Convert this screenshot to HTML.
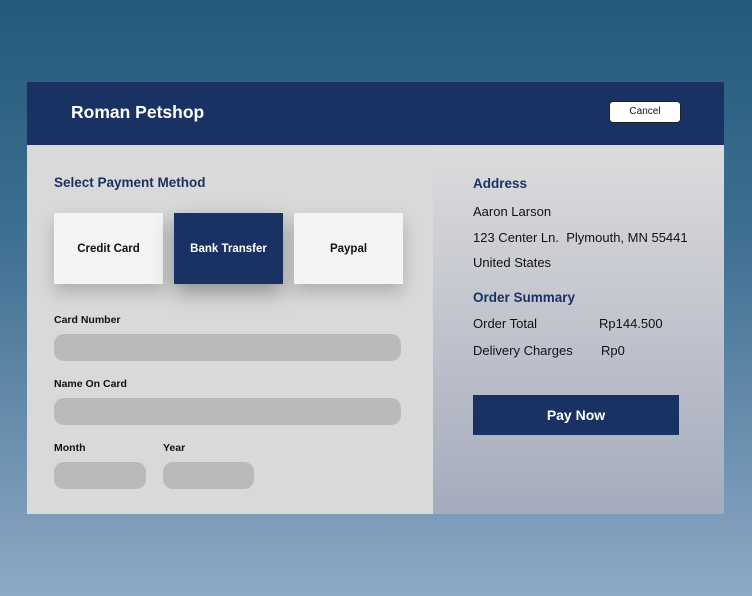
<!DOCTYPE html>
<html><head><style>
*{margin:0;padding:0;box-sizing:border-box}
body{width:752px;height:596px;overflow:hidden;background:linear-gradient(#235a7a 0%,#3f6f92 40%,#8ea9c6 100%);font-family:"Liberation Sans",sans-serif;position:relative}
.card{position:absolute;left:27px;top:82px;width:697px;height:432px;background:#d9d9d9}
.hdr{position:absolute;left:0;top:0;width:697px;height:63px;background:#1a3263}
.title{position:absolute;left:44px;top:20px;color:#fff;font-weight:bold;font-size:17.5px}
.cancel{position:absolute;left:582px;top:19px;width:72px;height:22px;background:#fff;border:1px solid #222;border-radius:4px;font-size:10px;text-align:center;line-height:20px;color:#111}
.right{position:absolute;left:406px;top:63px;width:291px;height:369px;background:linear-gradient(#dcdcdd,#a5abbd)}
.abs{position:absolute}
.h{color:#1a3263;font-weight:bold;font-size:13.5px}
.lbl{font-weight:bold;font-size:10.5px;color:#111}
.inp{position:absolute;background:#bbb8b8;border-radius:10px}
.opt{position:absolute;top:131px;width:109px;height:71px;background:#f2f4f6;box-shadow:0 8px 16px rgba(0,0,0,.2);font-weight:bold;font-size:11.5px;text-align:center;line-height:72px;color:#111}
.t{font-size:13px;color:#111}
</style></head><body>
<div class="card">
<div class="hdr"><div class="title">Roman Petshop</div><div class="cancel">Cancel</div></div>
<div class="abs h" style="left:27px;top:93px">Select Payment Method</div>
<div class="opt" style="left:27px">Credit Card</div>
<div class="opt" style="left:147px;background:#1a3263;color:#fff;box-shadow:0 8px 20px rgba(0,0,0,.35)">Bank Transfer</div>
<div class="opt" style="left:267px">Paypal</div>
<div class="abs lbl" style="left:27px;top:232px">Card Number</div>
<div class="inp" style="left:27px;top:252px;width:347px;height:27px"></div>
<div class="abs lbl" style="left:27px;top:296px">Name On Card</div>
<div class="inp" style="left:27px;top:316px;width:347px;height:27px"></div>
<div class="abs lbl" style="left:27px;top:360px">Month</div>
<div class="abs lbl" style="left:136px;top:360px">Year</div>
<div class="inp" style="left:27px;top:380px;width:92px;height:27px"></div>
<div class="inp" style="left:136px;top:380px;width:91px;height:27px"></div>
<div class="right">
<div class="abs h" style="left:40px;top:31px">Address</div>
<div class="abs t" style="left:40px;top:59px">Aaron Larson</div>
<div class="abs t" style="left:40px;top:85px">123 Center Ln.&nbsp; Plymouth, MN 55441</div>
<div class="abs t" style="left:40px;top:110px">United States</div>
<div class="abs h" style="left:40px;top:145px">Order Summary</div>
<div class="abs t" style="left:40px;top:171px">Order Total</div>
<div class="abs t" style="left:166px;top:171px">Rp144.500</div>
<div class="abs t" style="left:40px;top:198px">Delivery Charges</div>
<div class="abs t" style="left:168px;top:198px">Rp0</div>
<div class="abs" style="left:40px;top:250px;width:206px;height:40px;background:#1a3263;color:#fff;font-weight:bold;font-size:14px;text-align:center;line-height:40px">Pay Now</div>
</div>
</div>
</body></html>
